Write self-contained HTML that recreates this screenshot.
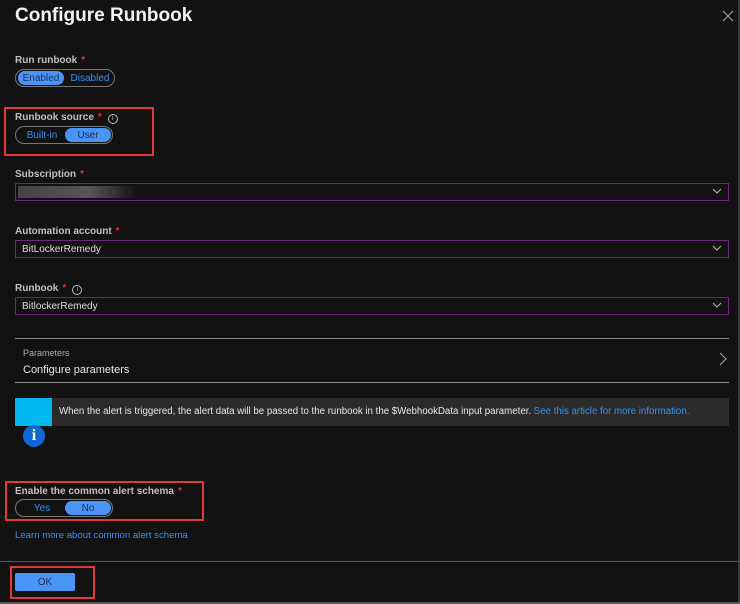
<!DOCTYPE html>
<html><head><style>
*{margin:0;padding:0;box-sizing:border-box}
body{width:740px;height:604px;background:#121213;font-family:"Liberation Sans",sans-serif;position:relative;overflow:hidden;color:#ddd}
.a{position:absolute}
.lbl{font-size:10px;font-weight:bold;color:#c0c0c0}
.star{color:#e0302f;margin-left:4px}
.tog{border:1px solid #777;border-radius:9px;height:18px;font-size:10px;color:#3c8ff0}
.tog span{position:absolute;top:1px;height:14px;line-height:16px;text-align:center;border-radius:7px}
.on{background:#4a94f5;color:#1a2e52}
.dd{left:15px;width:714px;height:18px;border:1px solid #6a2a78;font-size:10px;color:#ddd;padding:3px 0 0 6px}
.chev{position:absolute;right:6px;top:3px}
.red{border:2px solid #e03a3e}
.info{display:inline-block;width:10px;height:10px;border:1px solid #bbb;border-radius:50%;font-size:7px;text-align:center;line-height:8px;color:#bbb;font-weight:normal;margin-left:6px;vertical-align:0}
</style></head><body>
<div class="a" style="right:0;top:0;width:2px;height:604px;background:#3a3a3a"></div>
<div class="a" style="left:15px;top:5px;font-size:19px;font-weight:bold;color:#f2f2f2">Configure Runbook</div>
<svg class="a" style="left:722px;top:10px" width="12" height="12"><path d="M1 1L11 11M11 1L1 11" stroke="#999" stroke-width="1.2"/></svg>

<div class="a lbl" style="left:15px;top:55px">Run runbook<span class="star">*</span></div>
<div class="a tog" style="left:15px;top:69px;width:100px"><span class="on" style="left:2px;width:46px">Enabled</span><span style="left:52px;width:44px">Disabled</span></div>

<div class="a red" style="left:4px;top:107px;width:150px;height:49px"></div>
<div class="a lbl" style="left:15px;top:112px">Runbook source<span class="star">*</span><span class="info">i</span></div>
<div class="a tog" style="left:15px;top:126px;width:98px"><span style="left:4px;width:44px">Built-in</span><span class="on" style="left:49px;width:46px">User</span></div>

<div class="a lbl" style="left:15px;top:169px">Subscription<span class="star">*</span></div>
<div class="a dd" style="top:183px"><div class="a" style="left:2px;top:2px;width:120px;height:12px;background:linear-gradient(90deg,#444,#555 60%,#121213)"></div><svg class="chev" width="10" height="8"><path d="M1 2L5 6L9 2" stroke="#bbb" fill="none"/></svg></div>

<div class="a lbl" style="left:15px;top:226px">Automation account<span class="star">*</span></div>
<div class="a dd" style="top:240px">BitLockerRemedy<svg class="chev" width="10" height="8"><path d="M1 2L5 6L9 2" stroke="#bbb" fill="none"/></svg></div>

<div class="a lbl" style="left:15px;top:283px">Runbook<span class="star">*</span><span class="info">i</span></div>
<div class="a dd" style="top:297px">BitlockerRemedy<svg class="chev" width="10" height="8"><path d="M1 2L5 6L9 2" stroke="#bbb" fill="none"/></svg></div>

<div class="a" style="left:15px;top:338px;width:714px;height:1px;background:#8a8a8a"></div>
<div class="a" style="left:23px;top:348px;font-size:9px;color:#aaa">Parameters</div>
<div class="a" style="left:23px;top:364px;font-size:11px;color:#e6e6e6">Configure parameters</div>
<svg class="a" style="left:719px;top:352px" width="8" height="14"><path d="M1 1L7 7L1 13" stroke="#aaa" fill="none"/></svg>
<div class="a" style="left:15px;top:382px;width:714px;height:1px;background:#8a8a8a"></div>

<div class="a" style="left:15px;top:398px;width:714px;height:28px;background:#2b2b2b"></div>
<div class="a" style="left:15px;top:398px;width:37px;height:28px;background:#00b7f0"></div>
<div class="a" style="left:59px;top:406px;font-size:9.7px;color:#e8e8e8;white-space:nowrap">When the alert is triggered, the alert data will be passed to the runbook in the $WebhookData input parameter. <span style="color:#3c8ff0">See this article for more information.</span></div>
<div class="a" style="left:23px;top:425px;width:22px;height:22px;border-radius:50%;background:#1268d3;color:#fff;font-weight:bold;font-size:16px;text-align:center;line-height:22px;font-family:'Liberation Serif',serif">i</div>

<div class="a red" style="left:5px;top:481px;width:199px;height:40px"></div>
<div class="a lbl" style="left:15px;top:486px">Enable the common alert schema<span class="star">*</span></div>
<div class="a tog" style="left:15px;top:499px;width:98px"><span style="left:4px;width:44px">Yes</span><span class="on" style="left:49px;width:46px">No</span></div>
<div class="a" style="left:15px;top:530px;font-size:9.6px;color:#3c8ff0">Learn more about common alert schema</div>

<div class="a" style="left:0;top:561px;width:740px;height:1px;background:#555"></div>
<div class="a red" style="left:10px;top:566px;width:85px;height:33px"></div>
<div class="a" style="left:15px;top:573px;width:60px;height:18px;background:#4a94f5;border-radius:2px;font-size:10px;color:#1a2e52;text-align:center;line-height:19px">OK</div>
<div class="a" style="left:0;top:602px;width:740px;height:2px;background:#555"></div>
</body></html>
